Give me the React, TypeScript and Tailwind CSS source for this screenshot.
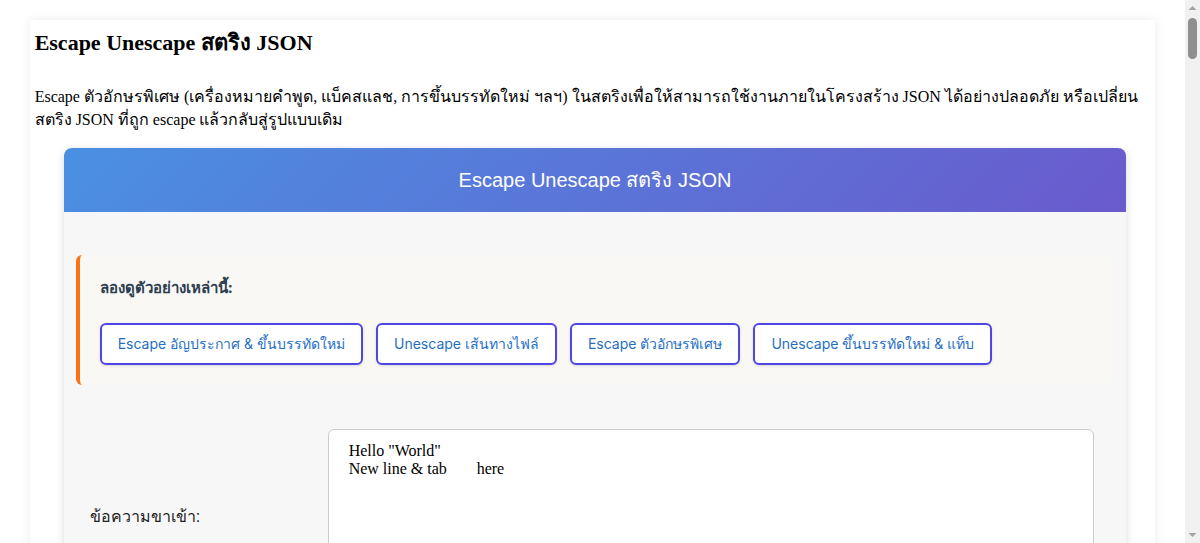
import React from 'react';

const examples = [
  'Escape อัญประกาศ & ขึ้นบรรทัดใหม่',
  'Unescape เส้นทางไฟล์',
  'Escape ตัวอักษรพิเศษ',
  'Unescape ขึ้นบรรทัดใหม่ & แท็บ',
];

const serif = "font-['Liberation_Serif','Noto_Sans',serif]";

const Scrollbar: React.FC = () => (
  <div className="w-[15px] shrink-0 h-full bg-[#f1f1f1] flex flex-col items-center">
    <svg width="15" height="15" viewBox="0 0 15 15" className="shrink-0">
      <path d="M3.5 10 L7.5 6 L11.5 10 Z" fill="#a3a3a3" />
    </svg>
    <div className="w-[9px] h-[41px] mt-[3px] rounded-full bg-[#8f8f8f]" />
    <div className="flex-1" />
    <svg width="15" height="15" viewBox="0 0 15 15" className="shrink-0">
      <path d="M3.5 5 L7.5 9 L11.5 5 Z" fill="#a3a3a3" />
    </svg>
  </div>
);

const App: React.FC = () => {
  return (
    <div className={`h-screen flex bg-white text-black ${serif}`}>
      <div className="flex-1 min-w-0 overflow-hidden">
        <div className="pt-5 pb-10">
          <div className="w-[95%] mx-auto bg-white px-[5px] pt-[9px] pb-10 shadow-[0_0_10px_rgba(0,0,0,0.08)] min-h-[6800px]">
            <h1 className="text-[22px] font-bold leading-7">Escape Unescape สตริง JSON</h1>

            <p className="mt-7 text-base leading-[23px]">
              Escape ตัวอักษรพิเศษ (เครื่องหมายคำพูด, แบ็คสแลช, การขึ้นบรรทัดใหม่ ฯลฯ) ในสตริงเพื่อให้สามารถใช้งานภายในโครงสร้าง JSON ได้อย่างปลอดภัย หรือเปลี่ยนสตริง JSON ที่ถูก escape แล้วกลับสู่รูปแบบเดิม
            </p>

            <div className="mt-[17px] ml-[29px] mr-[24px] rounded-lg overflow-hidden shadow-[0_2px_8px_rgba(0,0,0,0.15)]">
              <div className="h-16 flex items-center justify-center bg-[linear-gradient(135deg,#4a90e2,#6a5acd)]">
                <h2 className="text-white text-xl font-['Liberation_Sans',Arial,sans-serif]">
                  Escape Unescape สตริง JSON
                </h2>
              </div>

              <div className="bg-[#f7f7f7] pl-3 pr-[14px] pt-[43px] pb-10">
                <div className="bg-[#f9f8f4] border-l-4 border-[#f97316] rounded-md px-5 pt-[22px] pb-5 font-['Inter','Noto_Sans',sans-serif]">
                  <div className="text-[15px] font-bold text-[#2c3e50] leading-[22px]">ลองดูตัวอย่างเหล่านี้:</div>
                  <div className="mt-6 flex flex-wrap gap-[13px]">
                    {examples.map((label) => (
                      <button
                        key={label}
                        className="h-[42px] px-[16px] bg-white border-2 border-[#4f46e5] rounded-md text-sm text-[#1f6fc5] shadow-[0_1px_3px_rgba(0,0,0,0.12)]"
                      >
                        {label}
                      </button>
                    ))}
                  </div>
                </div>

                <div className="mt-[44px] flex items-center pl-[14px] pr-[18px]">
                  <label className="w-[238px] shrink-0 text-base text-[#222] font-['Liberation_Sans',Arial,sans-serif]">
                    ข้อความขาเข้า:
                  </label>
                  <textarea
                    className={`flex-1 h-[176px] bg-white border border-[#ccc] rounded-md px-5 pt-[12px] text-base leading-[18px] [tab-size:8] resize-y outline-none ${serif}`}
                    defaultValue={'Hello "World"\nNew line & tab\there'}
                  />
                </div>

                <div className="mt-6 flex flex-wrap gap-3 pl-[252px] font-['Inter','Noto_Sans',sans-serif]">
                  <button className="h-10 px-5 rounded-md bg-[#4a90e2] text-white text-sm">Escape</button>
                  <button className="h-10 px-5 rounded-md bg-[#6a5acd] text-white text-sm">Unescape</button>
                  <button className="h-10 px-5 rounded-md bg-white border border-[#ccc] text-[#333] text-sm">ล้าง</button>
                </div>

                <div className="mt-6 flex items-center pl-[14px] pr-[18px]">
                  <label className="w-[238px] shrink-0 text-base text-[#222] font-['Liberation_Sans',Arial,sans-serif]">
                    ผลลัพธ์:
                  </label>
                  <textarea
                    readOnly
                    className={`flex-1 h-[176px] bg-white border border-[#ccc] rounded-md px-5 pt-3 text-base leading-[18px] outline-none ${serif}`}
                    defaultValue={''}
                  />
                </div>
              </div>
            </div>

            <div className="mt-8 ml-[29px] mr-[24px] text-base leading-[23px]">
              <h2 className="text-xl font-bold mb-3">วิธีใช้งาน</h2>
              <p>วางข้อความที่ต้องการลงในช่องข้อความขาเข้า แล้วกดปุ่ม Escape หรือ Unescape เพื่อดูผลลัพธ์</p>
            </div>
          </div>
        </div>
      </div>
      <Scrollbar />
    </div>
  );
};

export default App;
